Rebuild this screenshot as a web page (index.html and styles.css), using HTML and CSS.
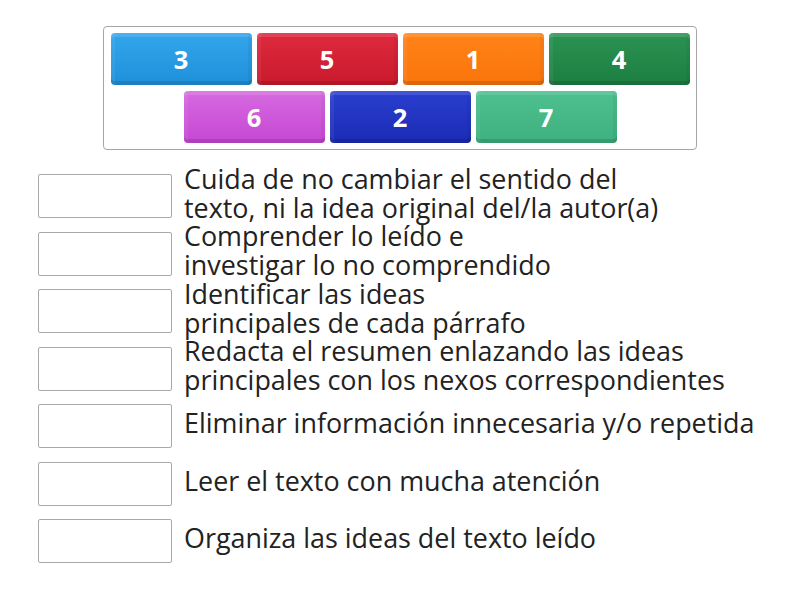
FILE: index.html
```html
<!DOCTYPE html>
<html lang="es">
<head>
<meta charset="utf-8">
<link rel="stylesheet" href="styles.css">
</head>
<body>
<div class="bank">
  <div class="tile t-blue">3</div>
  <div class="tile t-red">5</div>
  <div class="tile t-orange">1</div>
  <div class="tile t-green">4</div>
  <div class="tile t-purple">6</div>
  <div class="tile t-navy">2</div>
  <div class="tile t-teal">7</div>
</div>
<div class="list">
  <div class="row"><div class="slot"></div><div class="label">Cuida de no cambiar el sentido del<br>texto, ni la idea original del/la autor(a)</div></div>
  <div class="row"><div class="slot"></div><div class="label">Comprender lo leído e<br>investigar lo no comprendido</div></div>
  <div class="row"><div class="slot"></div><div class="label">Identificar las ideas<br>principales de cada párrafo</div></div>
  <div class="row"><div class="slot"></div><div class="label">Redacta el resumen enlazando las ideas<br>principales con los nexos correspondientes</div></div>
  <div class="row"><div class="slot"></div><div class="label">Eliminar información innecesaria y/o repetida</div></div>
  <div class="row"><div class="slot"></div><div class="label">Leer el texto con mucha atención</div></div>
  <div class="row"><div class="slot"></div><div class="label">Organiza las ideas del texto leído</div></div>
</div>
</body>
</html>
```
FILE: styles.css
```css
html, body { margin: 0; padding: 0; background: #fff; }
body { font-family: "Open Sans", "Liberation Sans", sans-serif; color: #222; }

.bank {
  box-sizing: border-box;
  width: 594px;
  margin: 26px 0 0 103px;
  border: 1px solid #a6a6a6;
  border-radius: 4px;
  padding: 6px 6px 6px 6px;
  display: flex;
  flex-wrap: wrap;
  justify-content: center;
  gap: 6px 5px;
}
.tile {
  box-sizing: border-box;
  width: 141px;
  height: 52px;
  border-radius: 4px;
  display: flex;
  align-items: center;
  justify-content: center;
  color: #fff;
  font-weight: 700;
  font-size: 25.5px;
  box-shadow: inset 0 -4px 0 rgba(0,0,0,0.12), inset 0 4px 0 rgba(255,255,255,0.12), inset 4px 0 0 rgba(255,255,255,0.06), inset -4px 0 0 rgba(0,0,0,0.04);
}
.t-blue { background: linear-gradient(#33a6ec, #1e90da); }
.t-red { background: linear-gradient(#de2a3e, #c91a2c); }
.t-orange { background: linear-gradient(#ff8418, #fb740a); }
.t-green { background: linear-gradient(#2a9452, #1d7e42); }
.t-purple { background: linear-gradient(#d66ae0, #c647d4); }
.t-navy { background: linear-gradient(#2a3fcf, #1b2bb4); }
.t-teal { background: linear-gradient(#4dc18f, #3fb07f); }

.list {
  margin: 24px 0 0 38px;
  display: flex;
  flex-direction: column;
  gap: 13.5px;
}
.row {
  display: flex;
  align-items: center;
  height: 44px;
}
.slot {
  box-sizing: border-box;
  flex: none;
  width: 134px;
  height: 44px;
  border: 1px solid #a9a9a9;
  border-radius: 2px;
  background: #fff;
}
.label {
  margin-left: 12px;
  font-size: 26.9px;
  line-height: 29px;
  white-space: nowrap;
  margin-top: -7px;
}
```
